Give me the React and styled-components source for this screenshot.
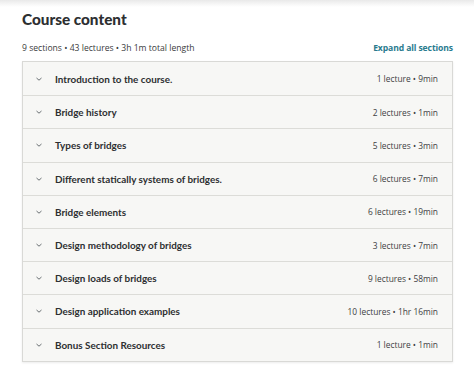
import React from 'react';
import styled, { createGlobalStyle } from 'styled-components';

const GlobalStyle = createGlobalStyle`
  html, body {
    margin: 0;
    padding: 0;
    background: #fff;
  }
  body {
    font-family: "Open Sans", "Noto Sans", sans-serif;
    color: #2d2f31;
  }
`;

const sections = [
  { title: 'Introduction to the course.', meta: '1 lecture • 9min' },
  { title: 'Bridge history', meta: '2 lectures • 1min' },
  { title: 'Types of bridges', meta: '5 lectures • 3min' },
  { title: 'Different statically systems of bridges.', meta: '6 lectures • 7min' },
  { title: 'Bridge elements', meta: '6 lectures • 19min' },
  { title: 'Design methodology of bridges', meta: '3 lectures • 7min' },
  { title: 'Design loads of bridges', meta: '9 lectures • 58min' },
  { title: 'Design application examples', meta: '10 lectures • 1hr 16min' },
  { title: 'Bonus Section Resources', meta: '1 lecture • 1min' },
];

const Page = styled.div`
  width: 474px;
  height: 376px;
  overflow: hidden;
  background: linear-gradient(#e9e9e9 0px, #f6f6f6 4px, #fff 7px);
  padding: 8px 21px 0 22px;
  box-sizing: border-box;
`;

const Title = styled.h2`
  margin: 0;
  font-family: "Lato", sans-serif;
  font-weight: 900;
  font-size: 15.3px;
  line-height: 22px;
  color: #2d2f31;
`;

const Summary = styled.div`
  display: flex;
  justify-content: space-between;
  align-items: center;
  margin-top: 10px;
  height: 16px;
`;

const Stats = styled.span`
  font-size: 8.6px;
  color: #3a3b3d;
`;

const ExpandLink = styled.span`
  font-size: 8.6px;
  font-weight: 700;
  color: #2a7b8e;
  letter-spacing: -0.1px;
`;

const Accordion = styled.div`
  margin-top: 5px;
  border: 1px solid #d9d9d6;
  box-shadow: 0 1px 2px rgba(0, 0, 0, 0.08);
`;

const Row = styled.div`
  display: flex;
  align-items: center;
  height: 33.2px;
  box-sizing: border-box;
  padding: 0 14px 0 12px;
  background: #f7f7f5;
  border-top: ${p => (p.first ? 'none' : '1px solid #dcdcd8')};
`;

const Chevron = styled.svg`
  width: 8px;
  height: 8px;
  margin-right: 12px;
  flex-shrink: 0;
`;

const SectionTitle = styled.span`
  flex: 1;
  font-family: "Lato", sans-serif;
  font-weight: 700;
  font-size: 9.9px;
  color: #2d2f31;
`;

const Meta = styled.span`
  font-size: 8.4px;
  color: #3e4143;
`;

const App = () => (
  <>
    <GlobalStyle />
    <Page>
      <Title>Course content</Title>
      <Summary>
        <Stats>9 sections • 43 lectures • 3h 1m total length</Stats>
        <ExpandLink>Expand all sections</ExpandLink>
      </Summary>
      <Accordion>
        {sections.map((s, i) => (
          <Row key={i} first={i === 0}>
            <Chevron viewBox="0 0 8 8">
              <path d="M1.5 3l2.5 2.2L6.5 3" fill="none" stroke="#6a6f73" strokeWidth="1" />
            </Chevron>
            <SectionTitle>{s.title}</SectionTitle>
            <Meta>{s.meta}</Meta>
          </Row>
        ))}
      </Accordion>
    </Page>
  </>
);

export default App;
